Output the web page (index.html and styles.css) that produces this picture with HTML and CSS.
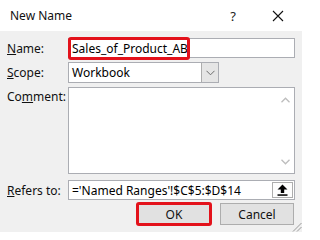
FILE: index.html
```html
<!DOCTYPE html>
<html>
<head>
<meta charset="utf-8">
<link rel="stylesheet" href="styles.css">
</head>
<body>
<div class="dialog">
  <div class="titlebar">
    <span class="title">New Name</span>
    <span class="help">?</span>
    <span class="close">
      <svg width="12" height="12" viewBox="0 0 12 12"><path d="M1 1 L11 11 M11 1 L1 11" stroke="#111" stroke-width="1.1" fill="none"/></svg>
    </span>
  </div>
  <div class="content">
    <div class="row">
      <span class="label"><u>N</u>ame:</span>
      <div class="field name-field">
        <span class="value">Sales_of_Product_AB</span>
        <span class="mark mark-name"></span>
      </div>
    </div>
    <div class="row">
      <span class="label"><u>S</u>cope:</span>
      <div class="field select">
        <span class="value grow">Workbook</span>
        <span class="drop">
          <svg width="9" height="6" viewBox="0 0 9 6"><path d="M0.5 0.8 L4.5 4.8 L8.5 0.8" stroke="#6d6d6d" stroke-width="1" fill="none"/></svg>
        </span>
      </div>
    </div>
    <div class="row top">
      <span class="label comment-label">Co<u>m</u>ment:</span>
      <div class="field textarea">
        <span class="grow"></span>
        <span class="scroll">
          <svg width="9" height="6" viewBox="0 0 9 6"><path d="M0.5 5.2 L4.5 1.2 L8.5 5.2" stroke="#bdbdbd" stroke-width="1.3" fill="none"/></svg>
          <svg width="9" height="6" viewBox="0 0 9 6"><path d="M0.5 0.8 L4.5 4.8 L8.5 0.8" stroke="#bdbdbd" stroke-width="1.3" fill="none"/></svg>
        </span>
      </div>
    </div>
    <div class="row refers">
      <span class="label"><u>R</u>efers to:</span>
      <div class="field">
        <span class="value grow">='Named Ranges'!$C$5:$D$14</span>
        <span class="collapse">
          <svg width="11" height="12" viewBox="0 0 11 12"><path d="M5.5 0.5 L10.5 5.5 L7.2 5.5 L7.2 9 L3.8 9 L3.8 5.5 L0.5 5.5 Z" fill="#000"/><rect x="0.5" y="10.3" width="10" height="1.5" fill="#000"/></svg>
        </span>
      </div>
    </div>
    <div class="buttons">
      <span class="btn ok">OK<span class="mark mark-ok"></span></span>
      <span class="btn">Cancel</span>
    </div>
  </div>
  <svg class="grip" width="10" height="10" viewBox="0 0 10 10"><path d="M9.5 1 L1 9.5 M9.5 5 L5 9.5" stroke="#9a9a9a" stroke-width="1" fill="none"/></svg>
</div>
</body>
</html>
```
FILE: styles.css
```css
body {
  margin: 0;
  font-family: "Noto Sans", "Open Sans", sans-serif;
  font-size: 12px;
  color: #000;
}

.dialog {
  width: 302px;
  height: 232px;
  background: #f0f0f0;
  display: flex;
  flex-direction: column;
  position: relative;
  overflow: hidden;
}

.titlebar {
  height: 31px;
  flex: none;
  background: #fff;
  display: flex;
  align-items: center;
  padding-left: 10px;
}

.title {
  flex: 1;
  font-size: 12px;
  color: #111;
}

.help {
  width: 12px;
  text-align: center;
  font-size: 13px;
  color: #222;
  margin-right: 33px;
}

.close {
  width: 12px;
  height: 12px;
  margin-right: 18px;
  display: flex;
}

.content {
  padding: 7px 7px 0 7px;
  display: flex;
  flex-direction: column;
}

.row {
  display: flex;
  align-items: center;
  margin-bottom: 4px;
}

.row.top {
  align-items: flex-start;
  margin-bottom: 6px;
}

.row.refers {
  margin-bottom: 3px;
}

.label {
  width: 61px;
  flex: none;
  color: #111;
}

.comment-label {
  padding-top: 1px;
}

.field {
  position: relative;
  box-sizing: border-box;
  width: 227px;
  height: 20px;
  border: 1px solid #abadb3;
  background: #fff;
  display: flex;
  align-items: center;
}

.value {
  padding-left: 3px;
  white-space: nowrap;
}

.grow {
  flex: 1;
}

.select {
  width: 151px;
  height: 21px;
  align-items: stretch;
}

.select .value {
  display: flex;
  align-items: center;
}

.drop {
  width: 16px;
  flex: none;
  background: #e5e5e5;
  border-left: 1px solid #acacac;
  display: flex;
  align-items: center;
  justify-content: center;
}

.textarea {
  height: 87px;
  align-items: stretch;
}

.scroll {
  width: 17px;
  flex: none;
  display: flex;
  flex-direction: column;
  justify-content: space-between;
  align-items: center;
  padding: 9px 0 8px;
}

.collapse {
  align-self: stretch;
  width: 19px;
  flex: none;
  margin: 1px;
  border: 1px solid #adadad;
  background: #fdfdfd;
  display: flex;
  align-items: center;
  justify-content: center;
}

.buttons {
  display: flex;
  justify-content: flex-end;
  gap: 9px;
  padding-right: 1px;
}

.btn {
  position: relative;
  box-sizing: border-box;
  width: 74px;
  height: 22px;
  border: 1px solid #adadad;
  background: #e1e1e1;
  display: flex;
  align-items: center;
  justify-content: center;
  color: #111;
}

.mark {
  position: absolute;
  border: 3px solid #e3121b;
  border-radius: 3px;
  box-sizing: border-box;
}

.mark-name {
  left: -1px;
  top: -2px;
  width: 122px;
  height: 23px;
}

.mark-ok {
  left: -2px;
  top: -2px;
  right: -2px;
  bottom: -2px;
}

.grip {
  position: absolute;
  right: 0;
  bottom: 0;
}
```
